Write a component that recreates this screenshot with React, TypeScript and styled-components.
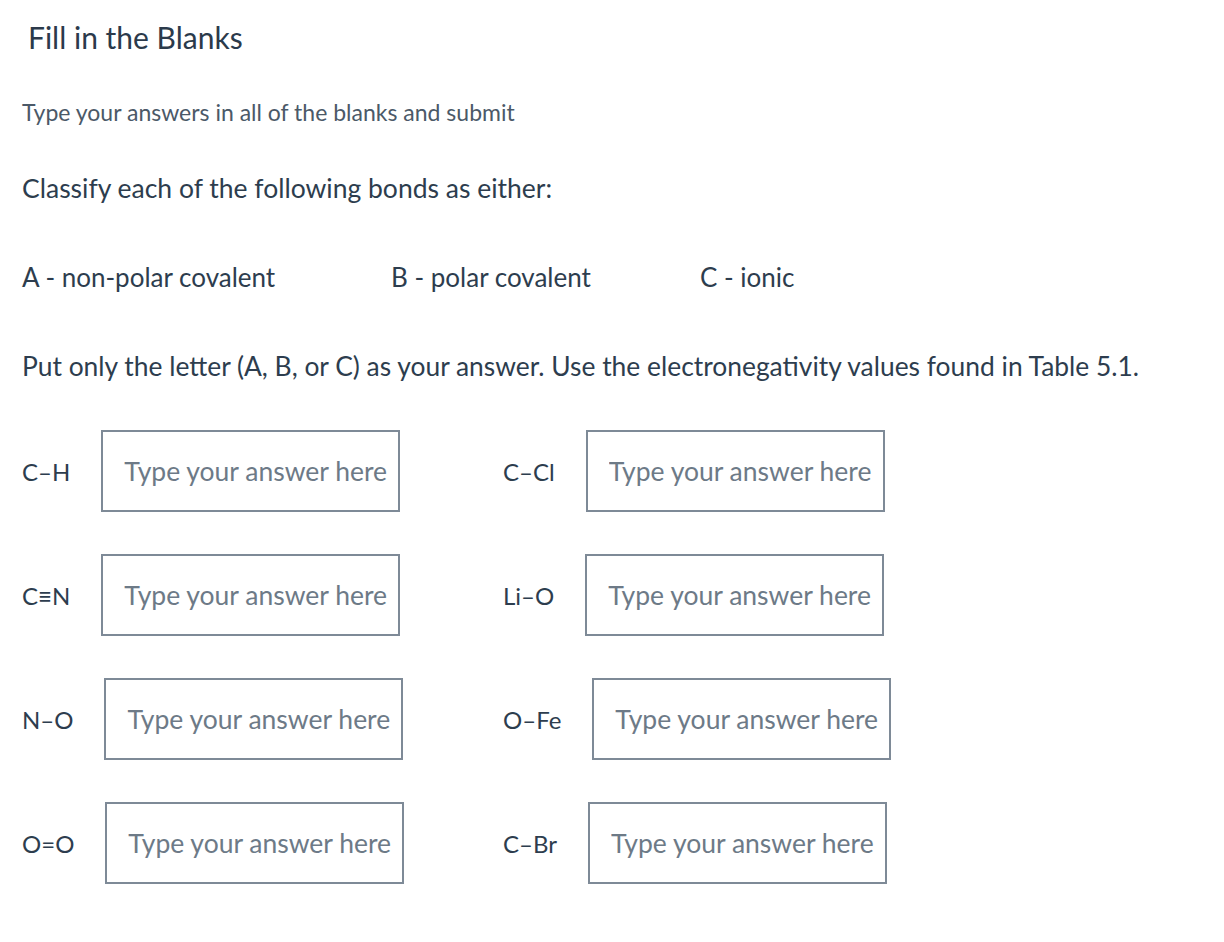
import * as React from 'react'
import styled, { createGlobalStyle } from 'styled-components'

const GlobalStyle = createGlobalStyle`
  html, body {
    margin: 0;
    padding: 0;
    background: #ffffff;
  }
  body {
    font-family: Lato, 'Open Sans', 'Liberation Sans', sans-serif;
    color: #2d3d4e;
  }
`

const Page = styled.div`
  padding: 19px 0 40px 22px;
  box-sizing: border-box;
  width: 1224px;
`

const Title = styled.h1`
  margin: 0 0 0 6px;
  font-size: 30px;
  line-height: 36px;
  font-weight: 400;
  color: #2b3a4b;
`

const Instructions = styled.p`
  margin: 42px 0 0;
  font-size: 23px;
  line-height: 30px;
  color: #4b5968;
`

const Question = styled.p<{ $gap: number; $size: number }>`
  margin: ${(p) => p.$gap}px 0 0;
  font-size: ${(p) => p.$size}px;
  line-height: 34px;
  color: #2d3d4e;
`

const Options = styled.div`
  margin-top: 56px;
  display: grid;
  grid-template-columns: 369px 309px auto;
  font-size: 26px;
  line-height: 32px;
  color: #2d3d4e;
`

const Blanks = styled.div`
  margin-top: 47px;
  display: grid;
  grid-template-columns: 481px auto;
  row-gap: 42px;
`

const Blank = styled.label`
  display: flex;
  align-items: center;
  gap: 31px;
`

const Bond = styled.span`
  font-size: 24px;
  color: #2d3d4e;
  white-space: nowrap;
`

const Answer = styled.input`
  width: 299px;
  height: 82px;
  box-sizing: border-box;
  border: 2px solid #7e8a97;
  border-radius: 0;
  padding: 0 0 0 21px;
  margin: 0;
  font-family: Lato, 'Open Sans', 'Liberation Sans', sans-serif;
  font-size: 26.5px;
  color: #2d3d4e;
  background: #ffffff;
  outline: none;

  &::placeholder {
    color: #6d7a87;
    opacity: 1;
  }
`

const bonds = ['C–H', 'C–Cl', 'C≡N', 'Li–O', 'N–O', 'O–Fe', 'O=O', 'C–Br']

export default function App() {
  return (
    <>
      <GlobalStyle />
      <Page>
        <Title>Fill in the Blanks</Title>
        <Instructions>Type your answers in all of the blanks and submit</Instructions>
        <Question $gap={44} $size={26.5}>
          Classify each of the following bonds as either:
        </Question>
        <Options>
          <span>A - non-polar covalent</span>
          <span>B - polar covalent</span>
          <span>C - ionic</span>
        </Options>
        <Question $gap={56} $size={26.4}>
          Put only the letter (A, B, or C) as your answer. Use the electronegativity values found in Table 5.1.
        </Question>
        <Blanks>
          {bonds.map((bond) => (
            <Blank key={bond}>
              <Bond>{bond}</Bond>
              <Answer type="text" placeholder="Type your answer here" />
            </Blank>
          ))}
        </Blanks>
      </Page>
    </>
  )
}
